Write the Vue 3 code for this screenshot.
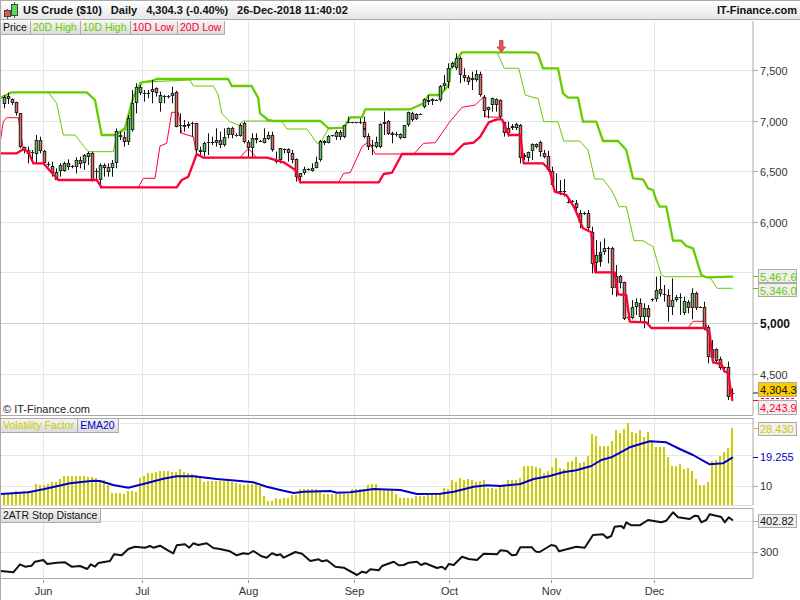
<template>
  <div class="chart">
    <header class="topbar">
      <svg class="logo" viewBox="0 0 16 18" aria-hidden="true">
        <path d="M4.5 8v10" stroke="#555" />
        <rect x="1.5" y="9.5" width="6" height="6" fill="#e05555" stroke="#444" />
        <path d="M11.5 1v16" stroke="#555" />
        <rect x="8.5" y="3.5" width="6" height="11" fill="#55dd55" stroke="#444" />
      </svg>
      <span class="name">US Crude ($10)</span>
      <span>Daily</span>
      <span>4,304.3 (-0.40%)</span>
      <span>26-Dec-2018 11:40:02</span>
      <span class="brand">IT-Finance.com</span>
    </header>

    <section class="pane main">
      <svg width="800" height="395" viewBox="0 21 800 395">
        <g class="grid">
          <line v-for="y in mainGrid" :key="y" x1="1" x2="753" :y1="y" :y2="y" />
          <line v-for="m in months" :key="m.label" :x1="m.x" :x2="m.x" y1="21" y2="415" />
        </g>
        <line class="strong" x1="1" x2="753" y1="323.5" y2="323.5" />

        <polyline class="ln thin green" :points="high10" />
        <polyline class="ln thick green" :points="high20" />
        <polyline class="ln thin red" :points="low10" />
        <g v-for="c in candles" :key="c.id">
          <line class="wick" :x1="c.x" :x2="c.x" :y1="c.hi" :y2="c.lo" />
          <rect :x="c.x - 1.75" :y="c.top" width="3.5" :height="c.h" fill="#222" />
          <rect v-if="c.h > 2" :x="c.x - 0.75" :y="c.top + 1" width="1.5" :height="c.h - 2" :fill="c.up ? '#55cc55' : '#ee6464'" />
        </g>
        <polyline class="ln thick red" :points="low20" />

        <path d="M499.5 40.5h3.5v6.5h2.5l-4.2 5.2-4.3-5.2h2.5z" fill="#e8504f" stroke="#b84040" stroke-width="0.8" />

        <g class="axis">
          <line x1="753" x2="753" y1="21" y2="415" />
          <line x1="0" x2="753" y1="415.5" y2="415.5" />
          <line v-for="t in mainTicks" :key="t.y" x1="753" x2="758" :y1="t.y" :y2="t.y" />
          <text v-for="t in mainTicks" :key="t.label" x="760" :y="t.y + 4" :class="{ bold: t.bold }">{{ t.label }}</text>
        </g>

        <line x1="753" x2="758" y1="276.5" y2="276.5" class="st-green" />
        <line x1="753" x2="758" y1="288.5" y2="288.5" class="st-green" />
        <line x1="753" x2="758" y1="393" y2="393" stroke="#111" />
        <line x1="753" x2="758" y1="400.5" y2="400.5" class="st-red" />
        <!-- a third tag is hidden behind these two, only its red edge peeks out -->
        <line class="st-red" x1="761" x2="795" y1="398.5" y2="398.5" stroke-dasharray="3 2" />
        <g v-for="t in mainTags" :key="t.label">
          <rect class="tag" x="758.5" :y="t.y" width="38" :height="t.hgt" :fill="t.bg" />
          <text class="tagtext" x="760" :y="t.y + 11" :class="t.cls">{{ t.label }}</text>
        </g>

        <text class="copy" x="3" y="413">© IT-Finance.com</text>
      </svg>
      <div class="legend">
        <span>Price</span>
        <span class="c-green">20D High</span>
        <span class="c-green">10D High</span>
        <span class="c-red">10D Low</span>
        <span class="c-red">20D Low</span>
      </div>
    </section>

    <section class="pane vol">
      <svg width="800" height="90" viewBox="0 418 800 90">
        <g class="grid">
          <line v-for="y in [423.5, 455.5, 486.5]" :key="y" x1="1" x2="753" :y1="y" :y2="y" />
          <line v-for="m in months" :key="m.label" :x1="m.x" :x2="m.x" y1="418" y2="505" />
        </g>
        <rect v-for="b in volBars" :key="b.x" :x="b.x" :y="505 - b.h" width="2" :height="b.h" fill="#cccc00" />
        <polyline class="ln ema" :points="ema" />
        <g class="axis">
          <line x1="0" x2="753" y1="418.5" y2="418.5" />
          <line x1="753" x2="753" y1="418" y2="505" />
          <line class="soft" x1="1" x2="753" y1="505.5" y2="505.5" />
          <line x1="753" x2="758" y1="486.5" y2="486.5" />
          <text x="760" y="490">10</text>
        </g>
        <line x1="753" x2="758" y1="428.5" y2="428.5" class="st-olive" />
        <line x1="753" x2="758" y1="457.5" y2="457.5" class="st-blue" />
        <rect class="tag" x="758.5" y="422.5" width="38" height="13" fill="#f0f0f0" />
        <text class="tagtext fl-olive" x="760" y="433">28.430</text>
        <text class="tagtext fl-blue" x="760" y="461">19.255</text>
      </svg>
      <div class="legend below">
        <span class="c-olive">Volatility Factor</span>
        <span class="c-blue">EMA20</span>
      </div>
    </section>

    <section class="pane stop">
      <svg width="800" height="72" viewBox="0 508 800 72">
        <g class="grid">
          <line v-for="y in [521.5, 552.5]" :key="y" x1="1" x2="753" :y1="y" :y2="y" />
          <line v-for="m in months" :key="m.label" :x1="m.x" :x2="m.x" y1="508" y2="578" />
        </g>
        <polyline class="ln atr" :points="atr" />
        <g class="axis">
          <line x1="0" x2="753" y1="508.5" y2="508.5" />
          <line x1="753" x2="753" y1="508" y2="578" />
          <line x1="753" x2="758" y1="521.5" y2="521.5" />
          <line x1="753" x2="758" y1="552.5" y2="552.5" />
          <text x="760" y="556">300</text>
        </g>
        <rect class="tag" x="758.5" y="514.5" width="38" height="13" fill="#f0f0f0" />
        <text class="tagtext fl-dark" x="760" y="525">402.82</text>
        <line class="edge" x1="0" x2="753" y1="578.5" y2="578.5" />
      </svg>
      <div class="legend below">
        <span>2ATR Stop Distance</span>
      </div>
    </section>

    <svg class="dates" width="800" height="20" viewBox="0 580 800 20">
      <g v-for="m in months" :key="m.label">
        <line :x1="m.x" :x2="m.x" y1="579" y2="583" stroke="#999" />
        <text :x="m.x" y="595" text-anchor="middle">{{ m.label }}</text>
      </g>
    </svg>
  </div>
</template>

<script setup>
// everything below is traced by hand, in 3x crops: [x, y] relative to a crop origin
const trace = (ox, oy, pts) => pts.map(([x, y]) => `${(ox + x / 3).toFixed(1)},${(oy + y / 3).toFixed(1)}`).join(' ')

const months = [
  { label: 'Jun', x: 43.5 }, { label: 'Jul', x: 142.5 }, { label: 'Aug', x: 248.5 }, { label: 'Sep', x: 354.5 },
  { label: 'Oct', x: 449.5 }, { label: 'Nov', x: 551.5 }, { label: 'Dec', x: 654.5 },
]
const mainGrid = [70.5, 121.5, 171.5, 222.5, 272.5, 374.5]
const mainTicks = [
  { y: 70.5, label: '7,500' }, { y: 121.5, label: '7,000' }, { y: 171.5, label: '6,500' },
  { y: 222.5, label: '6,000' }, { y: 323.5, label: '5,000', bold: true }, { y: 374.5, label: '4,500' },
]
const mainTags = [
  { y: 269.5, hgt: 13, label: '5,467.6', cls: 'fl-green', bg: '#f0f0f0' },
  { y: 283.5, hgt: 13, label: '5,346.0', cls: 'fl-green', bg: '#f0f0f0' },
  { y: 400.5, hgt: 14, label: '4,243.9', cls: 'fl-red', bg: '#f0f0f0' },
  { y: 382.5, hgt: 14, label: '4,304.3', cls: 'fl-dark', bg: '#ffcc00' },
]

const high20 = [
  trace(0, 0, [[0,295],[35,277],[260,277],[285,300],[305,405],[345,405],[375,385],[400,290],[425,247],[455,243],[470,237],[685,237],[695,258],[755,258],[775,295],[780,340],[801,357]]),
  trace(267, 0, [[0,360],[20,363],[160,363],[185,385],[230,383],[250,352],[285,352],[295,328],[430,328],[470,310],[485,285],[520,285],[545,255],[550,210],[575,170],[585,157],[801,157]]),
  trace(533, 0, [[15,162],[30,205],[75,205],[90,280],[105,293],[135,293],[150,365],[190,365],[210,423],[255,423],[280,450],[300,535],[330,538],[345,565],[360,570],[370,600]]),
  trace(533, 200, [[380,20],[400,20],[420,122],[445,122],[460,138],[480,145],[505,225],[520,232],[598,230]]),
].join(' ')

const high10 = [
  trace(0, 0, [[0,295],[35,277],[145,277],[170,310],[190,405],[225,405],[265,455],[340,455],[350,405],[385,385],[400,290],[420,247],[570,240],[580,258],[640,258],[655,285],[665,340],[690,365],[715,375],[730,363],[801,363]]),
  trace(267, 0, [[45,365],[60,387],[120,387],[150,430],[160,430],[185,385],[230,383],[250,352],[285,352],[295,328],[430,328],[470,310],[485,285],[520,285],[545,255],[550,210],[575,170],[585,157],[690,157],[712,205],[755,205],[775,285],[801,293]]),
  trace(533, 0, [[15,295],[32,365],[75,365],[92,423],[140,423],[165,450],[185,537],[210,537],[235,570],[250,600]]),
  trace(533, 200, [[258,20],[280,20],[303,122],[330,122],[360,140],[385,225],[395,230],[520,230],[535,238],[552,265],[598,265]]),
].join(' ')

const low20 = [
  trace(0, 0, [[0,460],[50,460],[70,448],[85,455],[100,490],[130,490],[175,540],[290,540],[305,562],[530,562],[545,540],[565,530],[590,462],[610,473],[801,473]]),
  trace(267, 0, [[50,487],[85,510],[100,547],[335,547],[350,522],[375,518],[405,462],[560,462],[590,432],[620,428],[640,410],[665,367],[690,358],[705,358],[725,405],[760,405],[770,490],[801,490]]),
  trace(533, 0, [[30,490],[50,510],[65,575],[100,585],[110,600]]),
  trace(533, 200, [[125,25],[150,85],[175,97],[187,217],[245,217],[255,283],[280,285],[290,365],[340,367],[355,384],[515,384],[530,400],[540,487],[565,492],[575,515],[585,518],[598,600]]),
].join(' ')

const low10 = [
  trace(0, 0, [[0,430],[10,365],[20,353],[55,353],[70,448],[85,455],[100,490],[130,490],[175,540],[290,540],[305,562],[415,562],[430,535],[465,535],[480,438],[500,430],[515,337],[535,337],[545,400],[580,410],[590,462],[610,473],[720,473],[745,445],[770,473],[801,473]]),
  trace(267, 0, [[50,487],[85,510],[100,547],[215,547],[230,520],[250,518],[285,440],[305,425],[325,462],[440,462],[470,430],[505,428],[545,370],[585,322],[625,315],[650,290],[655,350],[695,352],[705,358],[725,405],[760,405],[770,490],[801,490]]),
  trace(533, 0, [[30,490],[50,510],[65,575],[100,585],[110,600]]),
  trace(533, 200, [[125,25],[150,85],[175,97],[187,217],[245,217],[255,283],[280,285],[290,365],[340,367],[355,384],[465,384],[480,364],[515,364],[525,390],[540,487],[565,492],[575,515],[585,518],[598,600]]),
].join(' ')

const ema = [
  trace(0, 400, [[0,282],[85,277],[130,268],[210,250],[280,242],[300,243],[340,255],[385,263],[430,252],[490,236],[530,229],[580,229],[650,237],[720,243],[760,247],[800,260]]),
  trace(267, 400, [[40,270],[80,279],[110,275],[190,273],[210,278],[250,277],[320,267],[400,270],[450,282],[520,281],[560,275],[620,260],[660,256],[700,258],[760,252],[800,237]]),
  trace(533, 400, [[50,228],[90,217],[130,211],[175,198],[205,180],[235,172],[290,142],[350,124],[400,127],[440,147],[480,165],[530,193],[570,190],[598,173]]),
].join(' ')

const atr = [
  trace(0, 400, [[0,513],[40,517],[60,493],[75,500],[95,497],[105,485],[130,480],[142,492],[170,488],[195,487],[215,500],[240,498],[262,507],[272,493],[285,500],[295,489],[330,483],[342,463],[365,466],[385,447],[405,440],[435,443],[450,438],[460,443],[480,437],[505,452],[520,460],[530,436],[555,433],[568,443],[580,430],[595,435],[620,430],[640,444],[660,447],[690,454],[710,466],[730,460],[745,462],[760,453],[785,469],[800,473]]),
  trace(267, 400, [[15,460],[30,466],[40,463],[50,473],[85,456],[105,461],[130,483],[155,478],[165,484],[180,481],[205,500],[230,503],[270,525],[285,515],[298,518],[310,508],[335,511],[345,498],[380,485],[395,496],[410,495],[425,488],[450,485],[462,495],[475,490],[510,504],[525,500],[535,508],[545,492],[560,495],[585,470],[605,477],[630,480],[650,461],[690,463],[700,451],[720,453],[735,466],[748,464],[760,442],[795,442],[801,450]]),
  trace(533, 400, [[10,455],[20,456],[55,435],[68,438],[78,454],[130,440],[155,443],[180,405],[210,403],[222,414],[235,408],[245,380],[265,378],[272,385],[280,367],[295,376],[320,376],[345,360],[385,367],[400,362],[420,337],[435,352],[470,357],[485,347],[495,348],[505,367],[520,360],[530,343],[565,351],[575,367],[587,352],[598,360]]),
].join(' ')

// one bar every 4px, heights in px above the pane bottom
const volHeights = [
  12,12,13,14,13,14,14,14,21,20,20,21,23,23,26,29,29,29,29,29,29,28,28,27,25,25,20,12,12,12,11,14,14,13,
  27,29,32,32,33,34,34,34,33,33,36,33,32,31,30,27,23,24,24,24,24,24,24,23,22,21,20,21,21,21,19,9,
  4,4,7,6,7,7,10,10,16,16,16,16,16,15,11,11,11,11,11,11,11,16,16,16,16,20,21,21,15,15,15,15,11,7,7,7,7,9,9,9,12,12,12,12,17,16,25,23,27,25,26,25,23,24,25,17,17,16,19,21,25,25,25,27,39,39,39,
  38,37,32,34,38,47,37,36,43,44,48,42,43,49,71,69,59,59,59,64,75,72,76,82,73,72,75,68,73,65,58,58,58,48,39,39,41,36,37,34,26,20,20,23,44,45,49,53,57,77,
]
const volBars = volHeights.map((h, i) => ({ x: 3 + 4 * i, h }))

// [x, high, body top, body bottom, low, up]
const raw1 = [
  [13,285,292,312,325,1],[25,278,288,298,312,0],[37,295,298,308,315,0],[49,305,307,340,347,0],[61,340,340,440,445,0],[73,440,442,450,460,0],[85,440,450,462,490,1],[97,450,455,460,490,1],[106,405,420,462,490,1],[118,410,420,452,460,0],[130,450,452,490,490,0],[142,485,492,493,500,1],[154,485,497,518,530,0],[166,505,515,540,540,1],[178,490,495,512,530,1],[190,485,488,512,515,1],[202,478,488,500,510,0],[214,495,499,500,505,0],[226,472,480,500,520,1],[238,470,480,492,505,0],[250,462,465,490,510,1],[262,455,458,470,495,1],[274,455,460,540,545,0],[286,505,512,515,540,1],[298,490,495,540,565,1],[310,490,495,503,530,0],[322,490,502,515,530,1],[334,480,490,505,530,1],[346,385,392,490,505,1],[358,395,405,412,420,0],[370,395,410,425,440,0],[382,345,355,425,435,1],[394,270,308,390,395,1],[406,250,262,310,340,1],[418,255,262,278,285,1],[430,270,278,280,305,1],[442,270,278,282,295,1],[454,240,267,277,310,1],[466,262,265,280,290,0],[478,275,285,310,335,1],[490,285,288,292,310,1],[502,285,288,290,295,0],[514,260,278,288,310,1],[526,272,275,380,382,0],[538,340,374,376,400,0],[550,360,375,380,395,1],[562,365,372,378,385,1],[574,365,370,372,410,0],[586,370,370,450,460,0],[598,440,450,455,470,0],[610,425,430,455,470,1],[622,400,425,430,465,1],[634,410,425,427,435,0],[646,385,420,430,440,1],[658,395,420,435,445,0],[670,385,410,435,440,1],[682,382,385,405,415,1],[694,380,385,405,415,0],[706,400,404,406,410,0],[718,370,375,407,410,1],[730,365,370,425,430,0],[742,420,425,445,470,0],[754,400,415,445,475,1],[766,400,415,420,430,1],[778,420,422,424,425,0],[790,385,415,428,430,1],
]
const raw2 = [
  [4,395,405,418,420,1],[16,395,405,450,455,0],[28,455,480,487,490,1],[40,445,445,480,490,1],[52,445,447,449,460,0],[62,445,447,458,485,0],[74,450,458,480,490,0],[86,475,478,530,545,0],[98,520,520,532,550,1],[110,500,508,520,525,1],[122,505,507,510,512,0],[134,490,505,512,515,1],[146,470,485,503,505,1],[158,420,422,480,485,1],[170,420,422,430,435,1],[182,405,408,430,430,1],[194,405,406,408,410,0],[206,390,395,410,420,1],[218,390,395,410,420,0],[230,375,375,412,415,1],[242,350,366,368,370,0],[254,366,367,369,370,0],[264,366,367,369,370,0],[276,355,367,369,372,0],[288,350,367,388,390,0],[298,385,388,410,415,0],[310,400,408,440,450,0],[322,420,435,437,465,0],[334,410,425,440,445,1],[346,370,372,440,445,1],[358,335,365,372,405,0],[370,360,363,403,405,0],[382,395,400,405,430,0],[394,395,402,404,410,0],[406,400,403,413,418,1],[418,375,375,413,415,1],[430,335,335,375,380,1],[440,335,338,360,365,0],[452,340,343,358,360,1],[464,340,341,343,345,0],[476,295,298,322,325,1],[488,285,300,305,315,0],[500,295,298,303,315,0],[512,298,299,301,302,0],[524,255,258,300,305,1],[536,225,250,258,270,1],[548,190,203,245,265,1],[560,185,190,200,205,1],[572,160,175,205,210,1],[584,170,175,225,250,0],[596,205,225,235,245,0],[608,225,230,245,255,0],[620,215,235,240,270,0],[630,210,222,240,245,1],[642,215,222,285,290,0],[654,285,290,332,352,0],[666,320,322,330,355,1],[678,293,295,315,335,1],[690,295,298,315,335,0],[702,298,300,350,355,0],[714,365,365,398,410,0],[726,365,385,400,410,0],[738,372,378,385,390,1],[750,368,372,385,390,1],[762,372,375,475,490,0],[774,460,465,470,480,1],[786,455,455,475,485,1],[798,430,432,452,480,1],
]
const raw3 = [
  [10,430,432,442,445,1],[22,422,425,455,470,0],[34,450,460,470,475,0],[46,452,467,510,515,0],[58,500,512,555,560,0],[70,520,572,575,580,1],[82,540,572,575,585,1],[94,537,572,576,590,1],
]
const raw4 = [
  [106,0,5,8,10,0],[115,0,2,4,8,0],[125,0,10,25,45,0],[137,30,40,70,85,0],[150,35,39,41,45,1],[162,30,40,85,90,0],[175,80,95,192,220,0],[187,120,165,190,220,1],[197,165,165,185,200,1],[208,125,155,165,190,1],[220,115,145,155,165,1],[232,140,144,147,190,1],[244,140,145,265,285,0],[256,195,228,265,290,1],[268,225,228,248,265,0],[280,245,245,358,360,0],[292,345,352,355,360,1],[304,300,320,355,358,1],[316,295,305,320,345,1],[328,295,308,350,365,0],[340,310,325,350,385,1],[352,315,325,350,370,0],[364,295,297,299,305,1],[376,230,270,298,305,1],[385,228,268,282,290,0],[398,255,282,284,305,1],[410,268,285,320,365,0],[421,235,300,322,345,1],[433,285,292,300,305,1],[445,280,290,295,345,0],[457,290,303,340,345,1],[469,300,305,325,340,0],[481,265,278,325,358,1],[493,275,278,325,330,0],[505,319,320,322,323,0],[517,305,322,385,390,0],[529,375,382,472,490,0],[541,420,448,475,485,1],[553,445,448,482,490,0],[565,470,478,505,510,0],[575,500,501,503,515,0],[587,485,500,592,600,0],[598,565,579,581,595,0],
]

const toCandles = (rows, ox, oy, start) => rows.map(([x, hi, top, bot, lo, up], i) => {
  const cx = 4.5 + 4 * Math.round((ox + x / 3 - 4.5) / 4)
  const t = Math.round(oy + top / 3)
  return {
    id: `${start}-${i}`,
    x: cx,
    hi: oy + hi / 3,
    lo: oy + lo / 3,
    top: t,
    h: Math.max(1, Math.round(oy + bot / 3) - t),
    up: !!up,
  }
})
const candles = [
  ...toCandles(raw1, 0, 0, 'a'),
  ...toCandles(raw2, 267, 0, 'b'),
  ...toCandles(raw3, 533, 0, 'c'),
  ...toCandles(raw4, 533, 200, 'd'),
]
</script>

<style scoped>
.chart { width: 800px; height: 600px; background: #fff; box-sizing: border-box; border-left: 1px solid #aaa; overflow: hidden; font-family: "Liberation Sans", Arial, sans-serif; color: #111; }
.chart svg { display: block; margin-left: -1px; }

.topbar { display: flex; align-items: center; gap: 9px; height: 20px; box-sizing: border-box; padding: 0 3px 0 2px; border-top: 1px solid #aaa; border-bottom: 1px solid #aaa; background: linear-gradient(#ffffff, #e6e6e6); font-size: 11px; font-weight: bold; white-space: nowrap; margin-bottom: 1px; }
.logo { width: 16px; height: 18px; flex: 0 0 auto; margin: 0 -5px 0 0 !important; }
.brand { margin-left: auto; }

.pane { position: relative; }
.main { height: 395px; }
.vol { height: 90px; margin-top: 2px; }
.stop { height: 72px; }

.legend { position: absolute; top: 0; left: 0; display: flex; font-size: 10.5px; line-height: 13px; }
.legend.below { top: 1px; }
.legend span { padding: 0 3px 0 2px; background: linear-gradient(#f4f4f4, #dcdcdc); border-right: 1px solid #aaa; border-bottom: 1px solid #aaa; white-space: nowrap; }
.c-green { color: #66cc00; }
.c-red { color: #ff0033; }
.c-olive { color: #cccc00; }
.c-blue { color: #0000cc; }

.grid line { stroke: #e6e6e6; stroke-width: 1; }
.strong { stroke: #cfcfcf; }
.ln { fill: none; stroke-linejoin: round; stroke-linecap: round; }
.thin { stroke-width: 1; }
.thick { stroke-width: 2.3; }
.green { stroke: #66cc00; }
.red { stroke: #ff0033; }
.ema { stroke: #0000cc; stroke-width: 2; }
.atr { stroke: #111; stroke-width: 2; }
.wick { stroke: #111; stroke-width: 1; }

.axis line { stroke: #aaa; stroke-width: 1; }
.axis line.soft { stroke: #dcdcdc; }
.axis text, .tagtext, .copy, .dates text { font-family: "Liberation Sans", Arial, sans-serif; font-size: 11px; }
.axis text, .dates text { fill: #333; }
.axis text.bold { font-weight: bold; fill: #111; font-size: 12px; }
.tag { stroke: #aaa; stroke-width: 1; }
.fl-green { fill: #66cc00; }
.fl-red { fill: #ff0033; }
.fl-olive { fill: #cccc00; }
.fl-blue { fill: #0000cc; }
.fl-dark { fill: #111; }
.st-green { stroke: #66cc00; }
.st-red { stroke: #ff0033; }
.st-olive { stroke: #cccc00; }
.st-blue { stroke: #0000cc; }
.copy { fill: #222; }
.edge { stroke: #aaa; }
.dates { border-bottom: 1px solid #aaa; }
</style>
